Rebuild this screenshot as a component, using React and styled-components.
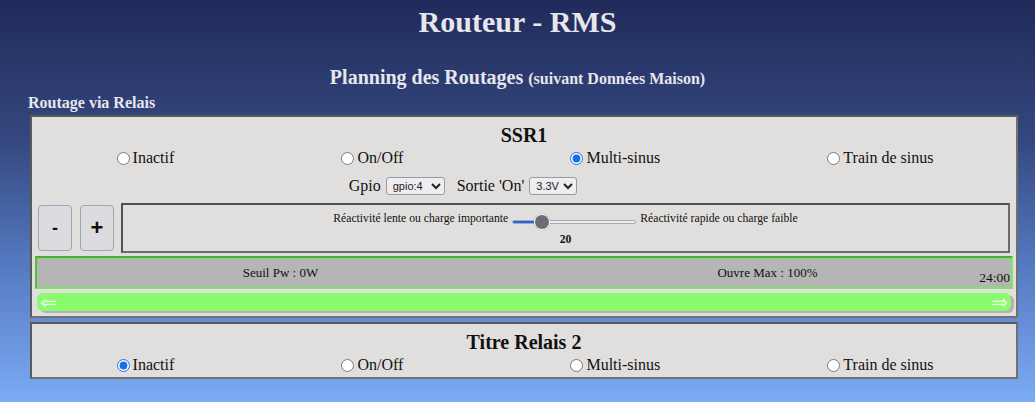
import React, { useState } from 'react'
import styled, { createGlobalStyle } from 'styled-components'

const GlobalStyle = createGlobalStyle`
    html, body {
        margin: 0;
        padding: 0;
    }
    body {
        min-height: 100vh;
        background: linear-gradient(to bottom, #212a5b 0%, #34487f 35%, #5478bf 65%, #7cabf5 100%);
        font-family: "Liberation Serif", "Times New Roman", serif;
        color: #111;
    }
`

const Header = styled.header`
    padding-top: 2px;
    text-align: center;
    color: #e6e6ec;
`
const Title = styled.h1`
    margin: 0;
    font-size: 30px;
    line-height: 40px;
    font-weight: 700;
`
const Subtitle = styled.h2`
    margin: 23px 0 0;
    font-size: 20px;
    line-height: 24px;
    font-weight: 700;
    small {
        font-size: 16px;
    }
`
const Main = styled.main`
    padding: 0 17px 0 28px;
`
const SectionTitle = styled.div`
    margin-top: 3px;
    font-size: 16px;
    line-height: 18px;
    font-weight: 700;
    color: #e6e6ec;
`
const Panel = styled.section`
    margin: ${props => props.first ? '3px' : '4px'} 0 0 2px;
    padding: 6px 0 ${props => props.compact ? '2px' : '5px'};
    background: #e1dfde;
    border: 2px solid #707070;
    border-top-color: #5a5a5a;
    border-left-color: #5a5a5a;
`
const PanelTitle = styled.div`
    text-align: center;
    font-size: 20px;
    line-height: 24px;
    font-weight: 700;
`
const ModeRow = styled.div`
    margin-top: 1px;
    display: flex;
    justify-content: space-around;
    font-size: 16px;
    line-height: 20px;
`
const ModeLabel = styled.label`
    display: flex;
    align-items: center;
    cursor: pointer;
    input {
        width: 13px;
        height: 13px;
        margin: 1px 3px 0 2px;
        accent-color: #1a6ee8;
    }
`
const OutputRow = styled.div`
    margin-top: 8px;
    padding-right: 122px;
    display: flex;
    justify-content: center;
    align-items: center;
    font-size: 16px;
    line-height: 20px;
`
const Field = styled.label`
    display: flex;
    align-items: center;
    gap: 5px;
    & + & {
        margin-left: 12px;
    }
`
const Select = styled.select`
    width: ${props => props.w}px;
    height: 18px;
    padding: 0 0 0 2px;
    font-family: "Liberation Sans", Arial, sans-serif;
    font-size: 11px;
    border: 1px solid #9a9aa4;
    border-radius: 3px;
    background: #eeedf0;
    color: #222;
`
const ControlRow = styled.div`
    margin-top: 7px;
    padding: 0 6px;
    display: flex;
    align-items: center;
    gap: 7px;
`
const StepButton = styled.button`
    flex: 0 0 34px;
    height: 46px;
    padding: 0;
    font-family: "Liberation Sans", Arial, sans-serif;
    font-size: ${props => props.big ? '22px' : '18px'};
    font-weight: 700;
    color: #111;
    background: #dcdbe0;
    border: 1px solid #a4a4b4;
    border-radius: 4px;
    cursor: pointer;
    & + & {
        margin-left: 1px;
    }
`
const SpeedBox = styled.div`
    flex: 1;
    padding-top: 3px;
    box-sizing: border-box;
    height: 50px;
    border: 2px solid #6a6a6a;
    border-top-color: #505050;
    border-left-color: #505050;
    text-align: center;
    font-size: 11.7px;
`
const SpeedLine = styled.div`
    display: flex;
    justify-content: center;
    align-items: center;
    gap: 4px;
    line-height: 14px;
`
const Range = styled.input`
    appearance: none;
    -webkit-appearance: none;
    width: 124px;
    height: 16px;
    margin: 6px 0 0;
    background: transparent;
    &::-webkit-slider-runnable-track {
        height: 4px;
        border-radius: 2px;
        border: 1px solid #a8a8b0;
        background: linear-gradient(to right, #1e63e8 0%, #1e63e8 ${props => props.fill}%, #efefef ${props => props.fill}%);
    }
    &::-webkit-slider-thumb {
        -webkit-appearance: none;
        width: 16px;
        height: 16px;
        margin-top: -7px;
        border-radius: 50%;
        background: #6c6c76;
        border: 1px solid #fff;
        box-shadow: 0 0 1px #999;
    }
`
const SpeedValue = styled.div`
    margin-top: 3px;
    font-weight: 700;
    line-height: 14px;
`
const InfoBar = styled.div`
    position: relative;
    margin: 3px 3px 0;
    display: grid;
    grid-template-columns: 1fr 1fr;
    height: 28px;
    padding-top: 1px;
    box-sizing: content-box;
    background: #b5b5b5;
    border: 2px solid #7be862;
    border-top-color: #3fb52a;
    border-left-color: #4cc236;
    font-size: 13px;
    line-height: 27px;
    text-align: center;
`
const EndTime = styled.span`
    position: absolute;
    right: 1px;
    bottom: 1px;
    font-size: 13.5px;
    line-height: 16px;
`
const PlageBar = styled.div`
    margin: 4px 5px 0;
    height: 18px;
    display: flex;
    justify-content: space-between;
    align-items: center;
    padding: 0 3px;
    background: #89fb6d;
    border-radius: 6px;
    box-shadow: 3px 2px 0 #b3b1b3;
    color: rgba(255, 255, 255, 0.85);
    font-family: "DejaVu Sans", sans-serif;
    font-size: 20px;
    line-height: 18px;
`

const modes = ['Inactif', 'On/Off', 'Multi-sinus', 'Train de sinus']

const RelayPanel = (props) => {
    const [mode, setMode] = useState(props.mode)
    const [speed, setSpeed] = useState(20)
    return (
        <Panel first={props.first} compact={!props.details}>
            <PanelTitle>{props.title}</PanelTitle>
            <ModeRow>
                {modes.map((m, i) => (
                    <ModeLabel key={m}>
                        <input type="radio" name={'mode' + props.id} checked={mode === i} onChange={() => setMode(i)} />
                        {m}
                    </ModeLabel>
                ))}
            </ModeRow>
            {props.details ? (
                <>
                    <OutputRow>
                        <Field>
                            Gpio
                            <Select w={59} defaultValue="4">
                                <option value="4">gpio:4</option>
                                <option value="5">gpio:5</option>
                            </Select>
                        </Field>
                        <Field>
                            Sortie 'On'
                            <Select w={48} defaultValue="3.3">
                                <option value="3.3">3.3V</option>
                                <option value="0">0V</option>
                            </Select>
                        </Field>
                    </OutputRow>
                    <ControlRow>
                        <StepButton>-</StepButton>
                        <StepButton big>+</StepButton>
                        <SpeedBox>
                            <SpeedLine>
                                <span>Réactivité lente ou charge importante</span>
                                <Range type="range" min="0" max="100" value={speed} fill={speed} onChange={e => setSpeed(+e.target.value)} />
                                <span>Réactivité rapide ou charge faible</span>
                            </SpeedLine>
                            <SpeedValue>{speed}</SpeedValue>
                        </SpeedBox>
                    </ControlRow>
                    <InfoBar>
                        <div>Seuil Pw : 0W</div>
                        <div>Ouvre Max : 100%</div>
                        <EndTime>24:00</EndTime>
                    </InfoBar>
                    <PlageBar>
                        <span>⇐</span>
                        <span>⇒</span>
                    </PlageBar>
                </>
            ) : null}
        </Panel>
    )
}

const App = () => {
    return (
        <>
            <GlobalStyle />
            <Header>
                <Title>Routeur - RMS</Title>
                <Subtitle>Planning des Routages <small>(suivant Données Maison)</small></Subtitle>
            </Header>
            <Main>
                <SectionTitle>Routage via Relais</SectionTitle>
                <RelayPanel id="1" first title="SSR1" mode={2} details />
                <RelayPanel id="2" title="Titre Relais 2" mode={0} />
            </Main>
        </>
    )
}

export default App
